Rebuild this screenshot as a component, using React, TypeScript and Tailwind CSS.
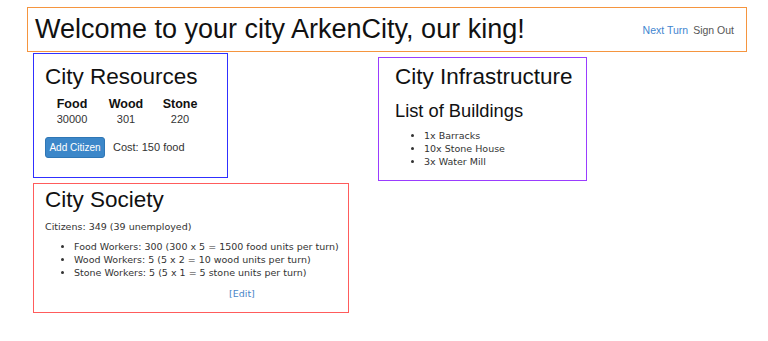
import React from 'react';

const sans = "font-['Liberation_Sans',Arial,sans-serif]";
const verdana = "font-['DejaVu_Sans',Verdana,sans-serif]";

const ResourceTable: React.FC = () => {
  const cols = [
    { name: 'Food', value: '30000' },
    { name: 'Wood', value: '301' },
    { name: 'Stone', value: '220' },
  ];
  return (
    <div className="flex mt-[6px]">
      {cols.map((c) => (
        <div key={c.name} className="w-[54px] text-center">
          <div className="text-[12.5px] font-bold leading-[16px] text-[#111]">{c.name}</div>
          <div className="text-[11px] leading-[14px] text-[#333]">{c.value}</div>
        </div>
      ))}
    </div>
  );
};

export default function App() {
  return (
    <div className={`${sans} bg-white min-h-[341px] pt-[7px]`}>
      {/* header */}
      <div className="ml-[27px] w-[720px] h-[45px] border border-[#f5953f] flex items-center justify-between pl-[7px] pr-[12px]">
        <h1 className="text-[27px] leading-none text-[#111]">Welcome to your city ArkenCity, our king!</h1>
        <div className="flex gap-[5px] text-[10.5px] pt-[2px]">
          <a className="text-[#3f86d0]">Next Turn</a>
          <span className="text-[#555]">Sign Out</span>
        </div>
      </div>

      <div className="flex items-start">
        <div className="ml-[33px] w-[316px] flex flex-col items-start">
          {/* resources */}
          <div className="mt-[1px] w-[195px] h-[125px] border-[1.5px] border-[#3030ff] pl-[11px] pt-[10px]">
            <h2 className="text-[22.5px] leading-[26px] text-[#111]">City Resources</h2>
            <ResourceTable />
            <div className="flex items-center mt-[11px]">
              <button className="h-[21px] w-[60px] rounded-[3px] bg-[#3c87c9] border border-[#2f76b5] text-white text-[10px]">Add Citizen</button>
              <span className="ml-[8px] text-[11px] text-[#333]">Cost: 150 food</span>
            </div>
          </div>
          {/* society */}
          <div className="mt-[5px] w-[316px] h-[130px] border border-[#ff5c5c] pl-[11px] pt-[3px]">
            <h2 className="text-[22.5px] leading-[26px] text-[#111]">City Society</h2>
            <p className={`${verdana} text-[9.5px] leading-[13px] text-[#333] mt-[7px]`}>Citizens: 349 (39 unemployed)</p>
            <ul className={`${verdana} list-disc pl-[29px] text-[9.5px] leading-[13px] text-[#333] mt-[7px] whitespace-nowrap`}>
              <li>Food Workers: 300 (300 x 5 = 1500 food units per turn)</li>
              <li>Wood Workers: 5 (5 x 2 = 10 wood units per turn)</li>
              <li>Stone Workers: 5 (5 x 1 = 5 stone units per turn)</li>
            </ul>
            <div className={`${verdana} text-[9.5px] leading-[13px] text-[#4a86c8] mt-[8px] pl-[184px]`}>[Edit]</div>
          </div>
        </div>

        {/* infrastructure */}
        <div className="ml-[29px] mt-[5px] w-[209px] h-[124px] border border-[#9a3cff] pl-[16px] pt-[6px]">
          <h2 className="text-[22.5px] leading-[26px] text-[#111]">City Infrastructure</h2>
          <h3 className="text-[18.3px] leading-[22px] text-[#111] mt-[10px]">List of Buildings</h3>
          <ul className={`${verdana} list-disc pl-[29px] text-[9.5px] leading-[13px] text-[#333] mt-[7px]`}>
            <li>1x Barracks</li>
            <li>10x Stone House</li>
            <li>3x Water Mill</li>
          </ul>
        </div>
      </div>
    </div>
  );
}
